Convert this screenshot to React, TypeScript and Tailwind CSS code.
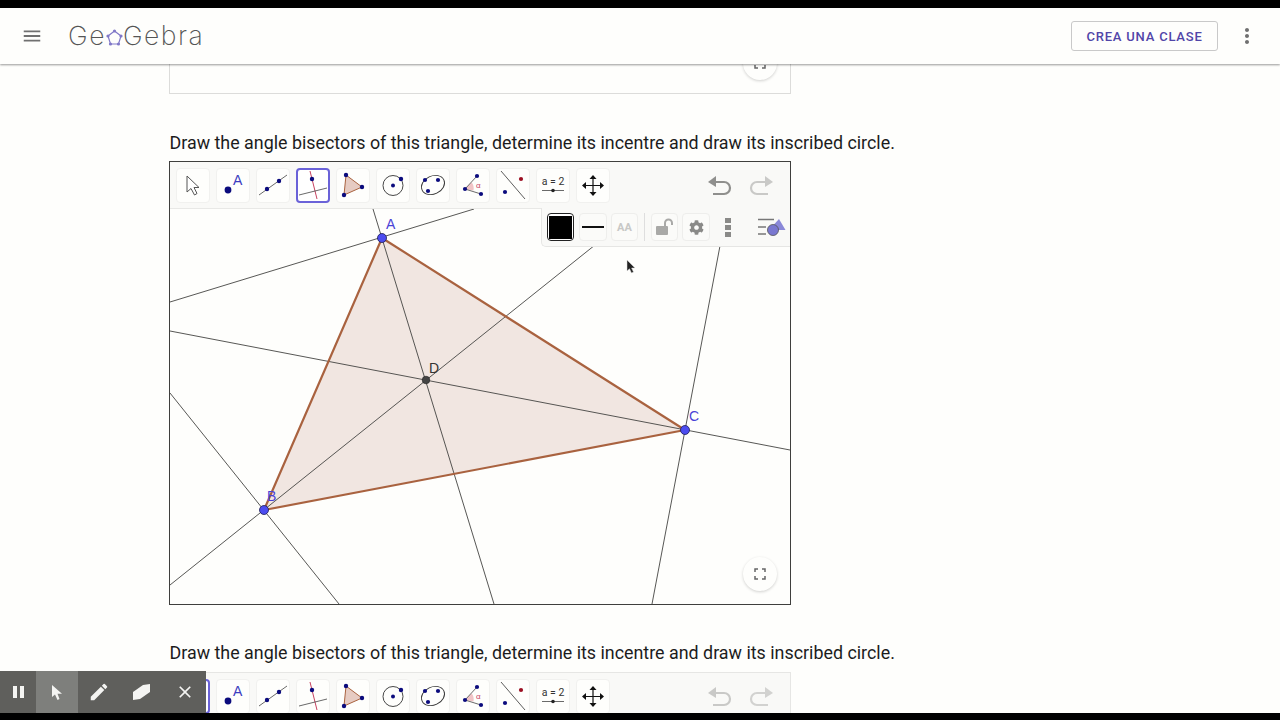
import React from "react";
import { FaCog } from "react-icons/fa";
import { MdClose, MdEdit, MdMenu, MdMoreVert } from "react-icons/md";

const NAVY = "#0b0b7d";

function ToolIcon({ name }: { name: string }) {
  return (
    <svg width="34" height="35" viewBox="0 0 34 35" fill="none">
      {name === "select" && (
        <path d="M11 8V24L15 20.5L18.5 27L21 25.5L18 19.5H23Z" fill="#fff" stroke="#555" strokeWidth="1" strokeLinejoin="round" />
      )}
      {name === "point" && (
        <>
          <circle cx="12" cy="22" r="3.4" fill={NAVY} />
          <text x="17" y="17" fontSize="14" fill="#3c3cc0" fontFamily="Liberation Sans, sans-serif">A</text>
        </>
      )}
      {name === "line" && (
        <>
          <path d="M3 27L31 7" stroke="#444" strokeWidth="0.8" />
          <circle cx="11" cy="21" r="2.2" fill={NAVY} />
          <circle cx="23" cy="13" r="2.2" fill={NAVY} />
        </>
      )}
      {name === "bisector" && (
        <>
          <path d="M14 3L21 31" stroke="#c7415f" strokeWidth="1" />
          <path d="M3 27L31 20" stroke="#444" strokeWidth="0.8" />
          <circle cx="16" cy="11" r="2.2" fill={NAVY} />
        </>
      )}
      {name === "polygon" && (
        <>
          <path d="M10 7L26 19L8 27Z" fill="#e6cbc2" stroke="#a9623f" strokeWidth="1" />
          <circle cx="10" cy="7" r="2.2" fill={NAVY} />
          <circle cx="26" cy="19" r="2.2" fill={NAVY} />
          <circle cx="8" cy="27" r="2.2" fill={NAVY} />
        </>
      )}
      {name === "circle" && (
        <>
          <circle cx="17" cy="17.5" r="10" stroke="#333" strokeWidth="0.9" />
          <circle cx="17" cy="17.5" r="2" fill={NAVY} />
          <circle cx="25" cy="11" r="2.2" fill={NAVY} />
        </>
      )}
      {name === "ellipse" && (
        <>
          <ellipse cx="17" cy="17" rx="12" ry="9" transform="rotate(-25 17 17)" stroke="#333" strokeWidth="0.9" />
          <circle cx="9" cy="12" r="2.1" fill={NAVY} />
          <circle cx="22" cy="12" r="2.1" fill={NAVY} />
          <circle cx="12" cy="23" r="2.1" fill={NAVY} />
        </>
      )}
      {name === "angle" && (
        <>
          <path d="M9 21L15.5 14.5C17.5 16.5 18 19 17.5 22.5Z" fill="#f1c4c6" />
          <path d="M21 8L9 21L25 26" stroke="#444" strokeWidth="0.8" />
          <circle cx="9" cy="21" r="2.1" fill={NAVY} />
          <circle cx="21" cy="8" r="2.1" fill={NAVY} />
          <circle cx="25" cy="26" r="2.1" fill={NAVY} />
          <text x="20" y="20" fontSize="8" fill="#c7415f" fontFamily="Liberation Sans, sans-serif">α</text>
        </>
      )}
      {name === "relation" && (
        <>
          <path d="M5 3L29 31" stroke="#333" strokeWidth="0.8" />
          <circle cx="9" cy="24" r="2.1" fill={NAVY} />
          <circle cx="25" cy="11" r="2.1" fill="#9b0f22" />
        </>
      )}
      {name === "slider" && (
        <>
          <text x="17" y="17" fontSize="10.5" textAnchor="middle" fill="#333" fontFamily="Roboto, sans-serif">a = 2</text>
          <path d="M6 22.5H28" stroke="#444" strokeWidth="0.8" />
          <circle cx="17" cy="22.5" r="1.8" fill="#222" />
        </>
      )}
      {name === "move" && (
        <>
          <path d="M17 9V26M8 17.5H26" stroke="#111" strokeWidth="1.2" />
          <path d="M17 7L20.5 11H13.5ZM17 28L13.5 24H20.5ZM6 17.5L10 14V21ZM28 17.5L24 21V14Z" fill="#111" />
        </>
      )}
    </svg>
  );
}

function UndoRedo({ undo, redo }: { undo: string; redo: string }) {
  return (
    <div className="ml-auto mr-[16px] flex items-center gap-[17px]">
      <svg width="25" height="20" viewBox="0 0 25 20" fill="none">
        <path d="M3 6H17A6 6 0 0 1 17 18H6" stroke={undo} strokeWidth="2.2" />
        <path d="M9 0V11L1 6Z" fill={undo} />
      </svg>
      <svg width="25" height="20" viewBox="0 0 25 20" fill="none">
        <path d="M22 6H8A6 6 0 0 0 8 18H19" stroke={redo} strokeWidth="2.2" />
        <path d="M16 0V11L24 6Z" fill={redo} />
      </svg>
    </div>
  );
}

const TOOLS = ["select", "point", "line", "bisector", "polygon", "circle", "ellipse", "angle", "relation", "slider", "move"];

function Toolbar({ active, faded }: { active: string; faded?: boolean }) {
  return (
    <div className="flex h-[47px] shrink-0 items-start gap-[6px] border-b border-[#e8e8e6] bg-[#f9f9f7] pl-[6px] pt-[6px]">
      {TOOLS.map((tool) => (
        <div
          key={tool}
          className={
            tool === active
              ? "h-[35px] w-[34px] rounded-[4px] border-2 border-[#6a62d8] bg-white"
              : "h-[35px] w-[34px] rounded-[4px] border border-[#f1f1ef] bg-[#fefefc]"
          }
        >
          <div className={tool === active ? "-m-[2px]" : "-m-px"}>
            <ToolIcon name={tool} />
          </div>
        </div>
      ))}
      <div className="flex h-[35px] flex-1 items-center">
        <UndoRedo undo={faded ? "#c9c9c7" : "#8f8f8d"} redo={faded ? "#d2d2d0" : "#c9c9c7"} />
      </div>
    </div>
  );
}

function FullscreenButton() {
  return (
    <div className="absolute bottom-[13px] right-[13px] flex h-[34px] w-[34px] items-center justify-center rounded-full bg-[#fefefc] shadow-[0_1px_3px_rgba(0,0,0,0.18)]">
      <svg width="12" height="12" viewBox="0 0 12 12" fill="none" stroke="#666" strokeWidth="1.5">
        <path d="M1 4V1H4M8 1H11V4M11 8V11H8M4 11H1V8" />
      </svg>
    </div>
  );
}

function StyleBar() {
  const button = "flex h-[28px] items-center justify-center rounded-[4px] border border-[#eeeeec] bg-[#fbfbf9]";
  return (
    <div className="absolute right-0 top-[-1px] flex h-[39px] w-[249px] items-center rounded-bl-[5px] border-b border-l border-[#e6e6e4] bg-[#f9f9f7] pl-[5px]">
      <div className="flex h-[28px] w-[27px] items-center justify-center rounded-[4px] border border-[#222] bg-white">
        <div className="h-[23px] w-[23px] bg-black" />
      </div>
      <div className={`${button} ml-[5px] w-[28px]`}>
        <div className="h-[2px] w-[22px] bg-[#111]" />
      </div>
      <div className={`${button} ml-[4px] w-[27px]`}>
        <span className="font-['Roboto',sans-serif] text-[11px] font-bold text-[#c8c8c6]">AA</span>
      </div>
      <div className="ml-[6px] h-[28px] w-px bg-[#dedede]" />
      <div className={`${button} ml-[6px] w-[27px]`}>
        <svg width="20" height="18" viewBox="0 0 20 18" fill="none">
          <rect x="1" y="8" width="12" height="9" rx="1" fill="#a9a9a7" />
          <path d="M10 8V5A3.5 3.5 0 0 1 17 5V7" stroke="#a9a9a7" strokeWidth="2" />
        </svg>
      </div>
      <div className={`${button} ml-[4px] w-[28px]`}>
        <FaCog className="text-[15px] text-[#8a8a88]" />
      </div>
      <div className="ml-[15px] flex w-[6px] flex-col gap-[2px]">
        <div className="h-[5px] w-[6px] bg-[#8a8a88]" />
        <div className="h-[5px] w-[6px] bg-[#8a8a88]" />
        <div className="h-[5px] w-[6px] bg-[#8a8a88]" />
      </div>
      <svg className="ml-[27px]" width="28" height="20" viewBox="0 0 28 20" fill="none">
        <path d="M0 2.5H16M0 10H8M0 17H8" stroke="#777" strokeWidth="1.5" />
        <path d="M21 2L27.5 13H11Z" fill="#8a88d8" />
        <circle cx="15" cy="13" r="5.5" fill="#7a78d0" stroke="#555" strokeWidth="0.8" />
      </svg>
    </div>
  );
}

function Geometry() {
  const thin = { stroke: "#444442", strokeWidth: 0.9 };
  const label = "Liberation Sans, sans-serif";
  return (
    <svg className="block h-full w-full" viewBox="170 209 620 395" fill="none">
      <path d="M382 238L264 510L685 430Z" fill="#f1e6e1" />
      <line x1="170" y1="302" x2="474" y2="209" {...thin} />
      <line x1="373" y1="209" x2="494" y2="604" {...thin} />
      <line x1="170" y1="585" x2="640" y2="209" {...thin} />
      <line x1="170" y1="393" x2="339" y2="604" {...thin} />
      <line x1="170" y1="331" x2="790" y2="450" {...thin} />
      <line x1="652" y1="604" x2="727" y2="209" {...thin} />
      <path d="M382 238L264 510L685 430Z" stroke="#a9623f" strokeWidth="2.2" strokeLinejoin="round" />
      <circle cx="382" cy="238" r="4.5" fill="#4c4cf0" stroke="#1d1d55" strokeWidth="0.8" />
      <circle cx="264" cy="510" r="4.5" fill="#4c4cf0" stroke="#1d1d55" strokeWidth="0.8" />
      <circle cx="685" cy="430" r="4.5" fill="#4c4cf0" stroke="#1d1d55" strokeWidth="0.8" />
      <circle cx="426" cy="380" r="3.8" fill="#444" stroke="#222" strokeWidth="0.6" />
      <text x="386" y="229" fontSize="14" fill="#4a42d6" fontFamily={label}>A</text>
      <text x="267" y="501" fontSize="14" fill="#4a42d6" fontFamily={label}>B</text>
      <text x="689" y="421" fontSize="14" fill="#4a42d6" fontFamily={label}>C</text>
      <text x="429" y="373" fontSize="14" fill="#333" fontFamily={label}>D</text>
    </svg>
  );
}

function Applet() {
  return (
    <div className="flex h-[444px] w-[622px] flex-col border border-[#3f3f3d] bg-[#fefefc]">
      <Toolbar active="bisector" />
      <div className="relative flex-1">
        <Geometry />
        <StyleBar />
        <svg className="absolute left-[456px] top-[50px]" width="10" height="15" viewBox="0 0 10 15">
          <path d="M1 1V12L3.5 9.8L5.5 14L7.5 13L5.6 9H9Z" fill="#222" stroke="#ddd" strokeWidth="0.5" />
        </svg>
        <FullscreenButton />
      </div>
    </div>
  );
}

function Header() {
  return (
    <header className="relative z-10 flex h-[56px] shrink-0 items-center bg-[#fefefc] pr-[21px] shadow-[0_1px_2px_rgba(0,0,0,0.4)]">
      <MdMenu className="ml-[21px] text-[22px] text-[#707070]" />
      <div className="ml-[25px] flex items-center font-['Inter',sans-serif] text-[26.5px] font-extralight tracking-[1.5px] text-[#555]">
        <span>Ge</span>
        <svg width="17" height="18" viewBox="0 0 17 18" fill="none" className="mt-[3px]">
          <path d="M8.5 2L15 7L12.5 15H4.5L2 7Z" stroke="#8078c8" strokeWidth="1.2" />
          <circle cx="8.5" cy="2" r="1.6" fill="#8078c8" />
          <circle cx="15" cy="7" r="1.6" fill="#8078c8" />
          <circle cx="12.5" cy="15" r="1.6" fill="#8078c8" />
          <circle cx="4.5" cy="15" r="1.6" fill="#8078c8" />
          <circle cx="2" cy="7" r="1.6" fill="#8078c8" />
        </svg>
        <span>Gebra</span>
      </div>
      <button className="ml-auto h-[30px] w-[147px] rounded-[3px] border border-[#c9c9c9] pt-px font-['Roboto',sans-serif] text-[13px] font-medium tracking-[0.8px] text-[#5145a8]">
        CREA UNA CLASE
      </button>
      <MdMoreVert className="ml-[17px] text-[24px] text-[#707070]" />
    </header>
  );
}

function AnnotationBar() {
  const cell = "flex h-full w-[42px] items-center justify-center";
  return (
    <div className="absolute bottom-0 left-0 z-20 flex h-[42px] w-[206px] bg-[#5f5f5c] text-[#f4f4f2]">
      <div className="flex h-full w-[36px] items-center justify-center gap-[3px]">
        <div className="h-[12px] w-[4px] bg-[#f4f4f2]" />
        <div className="h-[12px] w-[4px] bg-[#f4f4f2]" />
      </div>
      <div className={`${cell} bg-[#7e7f7c]`}>
        <svg width="12" height="17" viewBox="0 0 12 17">
          <path d="M1 1V13L4 10.5L6.5 16L8.5 15L6.5 9.8H11Z" fill="#f4f4f2" />
        </svg>
      </div>
      <div className={cell}>
        <MdEdit className="text-[22px]" />
      </div>
      <div className={`${cell} w-[43px]`}>
        <svg width="19" height="18" viewBox="0 0 19 18">
          <path d="M1 9L11 2L18 1V9L8 16L1 17Z" fill="#f4f4f2" />
        </svg>
      </div>
      <div className={`${cell} w-[43px]`}>
        <MdClose className="text-[20px]" />
      </div>
    </div>
  );
}

export default function App() {
  const prompt = "Draw the angle bisectors of this triangle, determine its incentre and draw its inscribed circle.";
  return (
    <div className="flex h-[720px] w-[1280px] flex-col overflow-hidden bg-black pb-[7px] pt-[8px]">
      <div className="relative flex min-h-0 flex-1 flex-col bg-[#fefefc]">
        <Header />
        <main className="flex min-h-0 flex-1 flex-col overflow-hidden pl-[169px] font-['Roboto',sans-serif] text-[17.87px] leading-[27px] text-[#1c1c1c]">
          <div className="relative h-[30px] w-[622px] shrink-0 border border-t-0 border-[#dcdcda]">
            <FullscreenButton />
          </div>
          <p className="ml-[0.5px] mt-[35px] h-[27px] shrink-0">{prompt}</p>
          <div className="mt-[5px] shrink-0">
            <Applet />
          </div>
          <p className="ml-[0.5px] mt-[34px] h-[27px] shrink-0">{prompt}</p>
          <div className="mt-[6px] w-[622px] shrink-0 border-x border-t border-[#e6e6e4]">
            <Toolbar active="select" faded />
          </div>
        </main>
        <AnnotationBar />
      </div>
    </div>
  );
}
